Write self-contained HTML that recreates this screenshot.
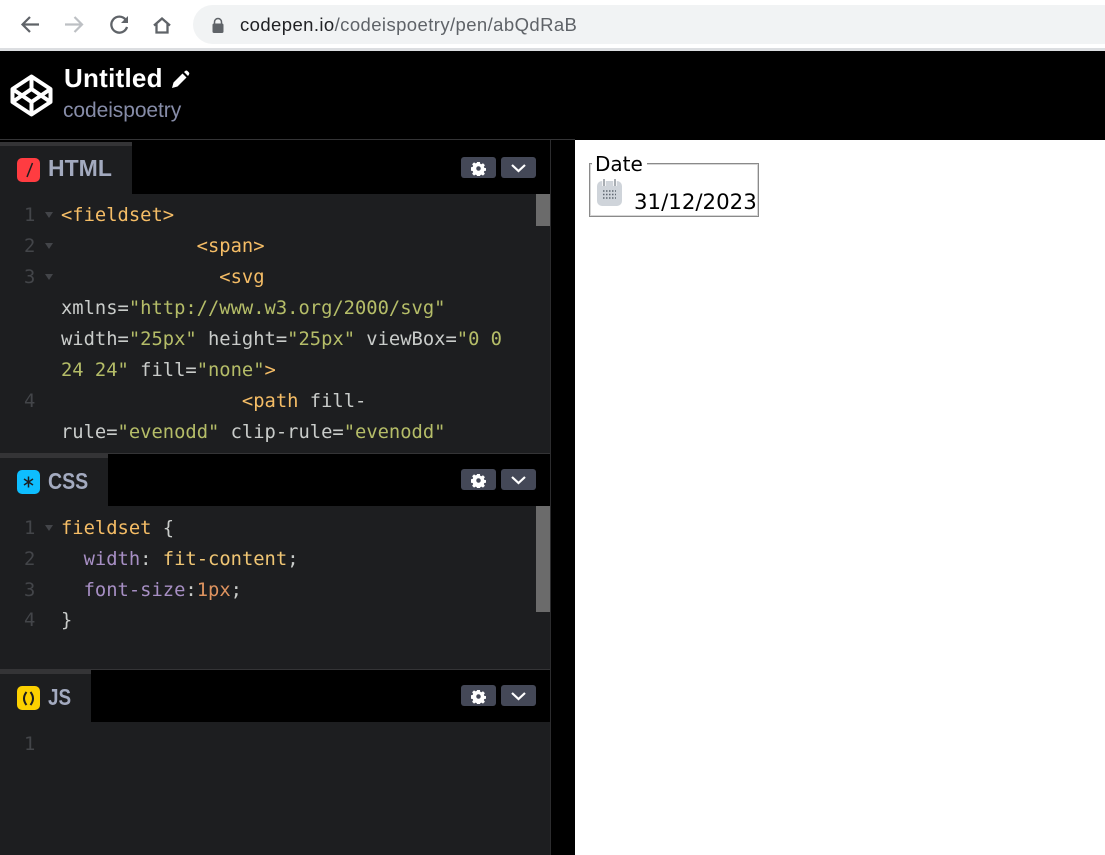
<!DOCTYPE html>
<html><head><meta charset="utf-8">
<style>
html,body{margin:0;padding:0;width:1105px;height:855px;overflow:hidden;background:#fff}
.a{position:absolute}
.bar{left:0;width:551px;height:52px;background:#000}
.top{left:0;height:4px;background:#343436}
.tab{left:0;height:48px;background:#1d1e20}
.ed{left:0;width:550px;background:#1d1e20}
.lbl{left:48px;font:bold 23px/28px "Liberation Sans",sans-serif;color:#a3aabf;white-space:nowrap;transform-origin:0 50%}
.ic{left:17px;width:23px;height:24px;border-radius:5px;text-align:center}
.btn{width:35px;height:21px;background:#444857;border-radius:3px}
.l{left:61px;font:18.8px/31px "DejaVu Sans Mono","Liberation Mono",monospace;white-space:pre;color:#c9ccca;height:31px}
.n{left:24px;font:18.8px/31px "DejaVu Sans Mono","Liberation Mono",monospace;color:#434549}
.tri{width:0;height:0;border-left:4px solid transparent;border-right:4px solid transparent;border-top:6px solid #434549;left:45px}
.t{color:#f5bd66}.v{color:#b5bd68}.p{color:#a78fc4}.o{color:#de935f}
</style></head><body>

<!-- browser bar -->
<div class="a" style="left:0;top:48px;width:1105px;height:3px;background:#dcdee1"></div>
<svg class="a" style="left:0;top:0" width="190" height="48" fill="none">
<path d="M39 24.500H23M30 17L22.500 24.500L30 32" stroke="#5f6368" stroke-width="2.200"/>
<path d="M65 24.500H82M74.500 17L82 24.500L74.500 32" stroke="#bdc0c4" stroke-width="2.200"/>
<path d="M125.500 19.500A8 8 0 1 0 127 27" stroke="#5f6368" stroke-width="2.300"/>
<path d="M128 16V23H121Z" fill="#5f6368"/>
<path d="M154 25.500L162 18.500L170 25.500M156.500 24V32.500H167.500V24" stroke="#5f6368" stroke-width="2.300"/>
</svg>
<div class="a" style="left:193px;top:5px;width:930px;height:39px;border-radius:20px;background:#f1f3f4"></div>
<svg class="a" style="left:211px;top:17px" width="14" height="17"><path d="M3.500 7V5a3.500 3.500 0 0 1 7 0v2" stroke="#5f6368" stroke-width="1.500" fill="none"/><rect x="1.500" y="6.500" width="11" height="9.500" rx="1.500" fill="#5f6368"/></svg>
<div class="a" style="left:240px;top:13px;font:18.5px/24px 'Liberation Sans',sans-serif;color:#202124;white-space:nowrap;letter-spacing:.41px">codepen.io<span style="color:#5f6368">/codeispoetry/pen/abQdRaB</span></div>

<!-- codepen header -->
<div class="a" style="left:0;top:51px;width:1105px;height:89px;background:#000"></div>
<div class="a" style="left:0;top:139px;width:575px;height:1px;background:#343436"></div>
<svg class="a" style="left:0;top:51px" width="60" height="89" fill="none" stroke="#fff" stroke-width="4" stroke-linejoin="round">
<path d="M31.500 25.500L50.500 38V51L31.500 63.500L12.500 51V38Z"/>
<path d="M31.500 25.500V38M31.500 51V63.500M12.500 38L31.500 51L50.500 38M12.500 51L31.500 38L50.500 51"/>
</svg>
<div class="a" style="left:64px;top:62px;font:bold 26px/32px 'Liberation Sans',sans-serif;color:#fff;white-space:nowrap;letter-spacing:.25px">Untitled</div>
<svg class="a" style="left:171px;top:70px" width="19" height="19"><path d="M1 18L2.500 12.500L11.500 3.500L15.500 7.500L6.500 16.500Z M13 2L14.500 .8Q15.500 .2 16.500 1L18 2.500Q18.700 3.500 18 4.500L17 6Z" fill="#fff"/></svg>
<div class="a" style="left:63px;top:98px;font:21px/26px 'Liberation Sans',sans-serif;color:#868ca8;white-space:nowrap;letter-spacing:-.08px">codeispoetry</div>

<!-- left side -->
<div class="a" style="left:550px;top:140px;width:25px;height:715px;background:#000"></div>
<div class="a" style="left:550px;top:140px;width:1px;height:715px;background:#2c2c2e"></div>
<div class="a" style="left:0;top:140px;width:550px;height:2px;background:#000"></div>

<!-- HTML panel -->
<div class="a bar" style="top:142px;width:550px"></div>
<div class="a top" style="top:142px;width:132px"></div>
<div class="a tab" style="top:146px;width:132px"></div>
<div class="a ic" style="top:158px;background:#ff3c41"><svg width="23" height="24"><path d="M15.500 5L10 19" stroke="#1d1e20" stroke-width="1.500"/></svg></div>
<div class="a lbl" style="top:154px">HTML</div>
<div class="a ed" style="top:194px;height:259px"></div>
<div class="a" style="left:536px;top:194px;width:14px;height:32px;background:#6b6b6b"></div>

<div class="a n" style="top:200px">1</div><div class="a tri" style="top:212px"></div>
<div class="a n" style="top:231px">2</div><div class="a tri" style="top:243px"></div>
<div class="a n" style="top:262px">3</div><div class="a tri" style="top:274px"></div>
<div class="a n" style="top:386px">4</div>
<div class="a l t" style="top:200px">&lt;fieldset&gt;</div>
<div class="a l t" style="top:231px">            &lt;span&gt;</div>
<div class="a l t" style="top:262px">              &lt;svg</div>
<div class="a l" style="top:293px">xmlns=<span class="v">"http://www.w3.org/2000/svg"</span></div>
<div class="a l" style="top:324px">width=<span class="v">"25px"</span> height=<span class="v">"25px"</span> viewBox=<span class="v">"0 0</span></div>
<div class="a l" style="top:355px"><span class="v">24 24"</span> fill=<span class="v">"none"</span><span class="t">&gt;</span></div>
<div class="a l" style="top:386px">                <span class="t">&lt;path</span> fill-</div>
<div class="a l" style="top:417px">rule=<span class="v">"evenodd"</span> clip-rule=<span class="v">"evenodd"</span></div>

<!-- CSS panel -->
<div class="a" style="left:0;top:453px;width:550px;height:1px;background:#343436"></div>
<div class="a bar" style="top:454px;width:550px"></div>
<div class="a top" style="top:454px;width:108px"></div>
<div class="a tab" style="top:458px;width:108px"></div>
<div class="a ic" style="top:470px;background:#0ebeff"><svg width="23" height="24" stroke="#1d1e20" stroke-width="1.500"><path d="M11.500 6.500V17.500M7 9L16 15M16 9L7 15"/></svg></div>
<div class="a lbl" style="top:467px;transform:scaleX(.85)">CSS</div>
<div class="a ed" style="top:506px;height:163px"></div>
<div class="a" style="left:536px;top:506px;width:14px;height:106px;background:#6b6b6b"></div>

<div class="a n" style="top:513px">1</div><div class="a tri" style="top:525px"></div>
<div class="a n" style="top:544px">2</div>
<div class="a n" style="top:575px">3</div>
<div class="a n" style="top:605px">4</div>
<div class="a l" style="top:513px"><span class="t">fieldset</span> {</div>
<div class="a l" style="top:544px">  <span class="p">width</span>: <span style="color:#f0c674">fit-content</span>;</div>
<div class="a l" style="top:575px">  <span class="p">font-size</span>:<span class="o">1px</span>;</div>
<div class="a l" style="top:605px">}</div>

<!-- JS panel -->
<div class="a" style="left:0;top:669px;width:550px;height:1px;background:#343436"></div>
<div class="a bar" style="top:670px;width:550px"></div>
<div class="a top" style="top:670px;width:91px"></div>
<div class="a tab" style="top:674px;width:91px"></div>
<div class="a ic" style="top:686px;background:#fcd000"><svg width="23" height="24" fill="none" stroke="#1d1e20" stroke-width="2"><path d="M9.500 6Q4.500 12.500 9.500 19M13.500 6Q18.500 12.500 13.500 19"/></svg></div>
<div class="a lbl" style="top:683px;transform:scaleX(.82)">JS</div>
<div class="a ed" style="top:722px;height:133px"></div>
<div class="a n" style="top:729px">1</div>

<!-- buttons -->
<svg width="0" height="0" style="position:absolute"><defs>
<symbol id="gear" viewBox="0 0 16 16"><path fill="#fff" fill-rule="evenodd" d="M6.500 1h3l.4 2 1.200.5 1.700-1.100 2 2-1.100 1.700.5 1.200 2 .4v2.600l-2 .4-.5 1.200 1.100 1.700-2 2-1.700-1.100-1.200.5-.4 2h-3l-.4-2-1.200-.5-1.700 1.100-2-2 1.100-1.700-.5-1.200-2-.4V6.700l2-.4.5-1.200-1.100-1.700 2-2 1.700 1.100 1.200-.5zM8 5.600a2.400 2.400 0 1 0 0 4.800 2.400 2.400 0 0 0 0-4.800z"/></symbol>
</defs></svg>

<div class="a btn" style="left:461px;top:157px"></div><svg class="a" style="left:471px;top:161px" width="15" height="15"><use href="#gear"/></svg>
<div class="a btn" style="left:501px;top:157px"></div><svg class="a" style="left:510px;top:163px" width="17" height="10" fill="none"><path d="M2 2L8.500 8L15 2" stroke="#fff" stroke-width="2.200"/></svg>

<div class="a btn" style="left:461px;top:469px"></div><svg class="a" style="left:471px;top:473px" width="15" height="15"><use href="#gear"/></svg>
<div class="a btn" style="left:501px;top:469px"></div><svg class="a" style="left:510px;top:475px" width="17" height="10" fill="none"><path d="M2 2L8.500 8L15 2" stroke="#fff" stroke-width="2.200"/></svg>

<div class="a btn" style="left:461px;top:685px"></div><svg class="a" style="left:471px;top:689px" width="15" height="15"><use href="#gear"/></svg>
<div class="a btn" style="left:501px;top:685px"></div><svg class="a" style="left:510px;top:691px" width="17" height="10" fill="none"><path d="M2 2L8.500 8L15 2" stroke="#fff" stroke-width="2.200"/></svg>

<!-- result -->
<div class="a" style="left:575px;top:140px;width:530px;height:715px;background:#fff"></div>
<div class="a" style="left:589px;top:163px;width:168px;height:52px;border:1px solid #8a8a8a;outline:1px solid rgba(138,138,138,.35);outline-offset:-2px"></div>
<div class="a" style="left:592px;top:152px;width:55px;height:24px;background:#fff"></div>
<div class="a" style="left:595px;top:152px;font:20px/24px 'DejaVu Sans',sans-serif;color:#000;white-space:nowrap">Date</div>
<svg class="a" style="left:596px;top:178px" width="27" height="28">
<rect x="1" y="3" width="25" height="25" rx="5" fill="#cfd4da"/>
<path d="M8 1V8M19 1V8" stroke="#fff" stroke-width="3.500"/>
<path d="M8 1V8M19 1V8" stroke="#7b828a" stroke-width="1.300"/>
<path d="M7 13H20M7 16.500H20M7 20H20" stroke="#5f6670" stroke-width="1.500" stroke-dasharray="1.500 1.500"/>
</svg>
<div class="a" style="left:634px;top:190px;font:21.300px/26px 'DejaVu Sans',sans-serif;color:#000;white-space:nowrap">31/12/2023</div>
</body></html>
